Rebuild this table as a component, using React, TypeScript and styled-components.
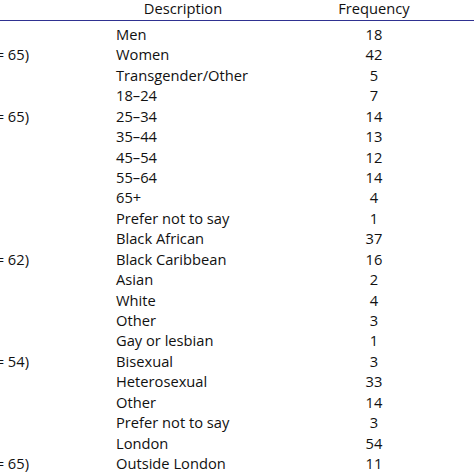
import styled, { createGlobalStyle } from "styled-components";

const GlobalStyle = createGlobalStyle`
body {
  margin: 0;
  background: #ffffff;
}
`;

const Table = styled.div`
width: 474px;
height: 474px;
overflow: hidden;
font-family: "Open Sans", "Noto Sans", sans-serif;
font-size: 14.7px;
font-weight: 500;
color: #111111;
`;

const HeadRow = styled.div`
display: flex;
line-height: 16px;
padding-bottom: 3.5px;
border-bottom: 1.5px solid #2f3191;
`;

const Body = styled.div`
padding-top: 3.4px;
`;

const Row = styled.div`
display: flex;
line-height: 20.45px;
height: 20.45px;
`;

const Label = styled.div`
width: 29px;
flex: none;
display: flex;
justify-content: flex-end;
overflow: hidden;
white-space: nowrap;
`;

const Desc = styled.div<{ $head?: boolean }>`
margin-left: 87px;
width: 134px;
flex: none;
white-space: nowrap;
text-align: ${(p) => (p.$head ? "center" : "left")};
`;

const Freq = styled.div`
margin-left: 70px;
width: 108px;
flex: none;
text-align: center;
`;

type Item = { label?: string; desc: string; freq: number };

const rows: Item[] = [
  { desc: "Men", freq: 18 },
  { label: "Gender (n = 65)", desc: "Women", freq: 42 },
  { desc: "Transgender/Other", freq: 5 },
  { desc: "18–24", freq: 7 },
  { label: "Age (n = 65)", desc: "25–34", freq: 14 },
  { desc: "35–44", freq: 13 },
  { desc: "45–54", freq: 12 },
  { desc: "55–64", freq: 14 },
  { desc: "65+", freq: 4 },
  { desc: "Prefer not to say", freq: 1 },
  { desc: "Black African", freq: 37 },
  { label: "Ethnicity (n = 62)", desc: "Black Caribbean", freq: 16 },
  { desc: "Asian", freq: 2 },
  { desc: "White", freq: 4 },
  { desc: "Other", freq: 3 },
  { desc: "Gay or lesbian", freq: 1 },
  { label: "Sexual orientation (n = 54)", desc: "Bisexual", freq: 3 },
  { desc: "Heterosexual", freq: 33 },
  { desc: "Other", freq: 14 },
  { desc: "Prefer not to say", freq: 3 },
  { desc: "London", freq: 54 },
  { label: "Location (n = 65)", desc: "Outside London", freq: 11 },
];

export default function App() {
  return (
    <>
      <GlobalStyle />
      <Table>
        <HeadRow>
          <Label />
          <Desc $head>Description</Desc>
          <Freq>Frequency</Freq>
        </HeadRow>
        <Body>
          {rows.map((r, i) => (
            <Row key={i}>
              <Label>{r.label ? <span>{r.label}</span> : null}</Label>
              <Desc>{r.desc}</Desc>
              <Freq>{r.freq}</Freq>
            </Row>
          ))}
        </Body>
      </Table>
    </>
  );
}
